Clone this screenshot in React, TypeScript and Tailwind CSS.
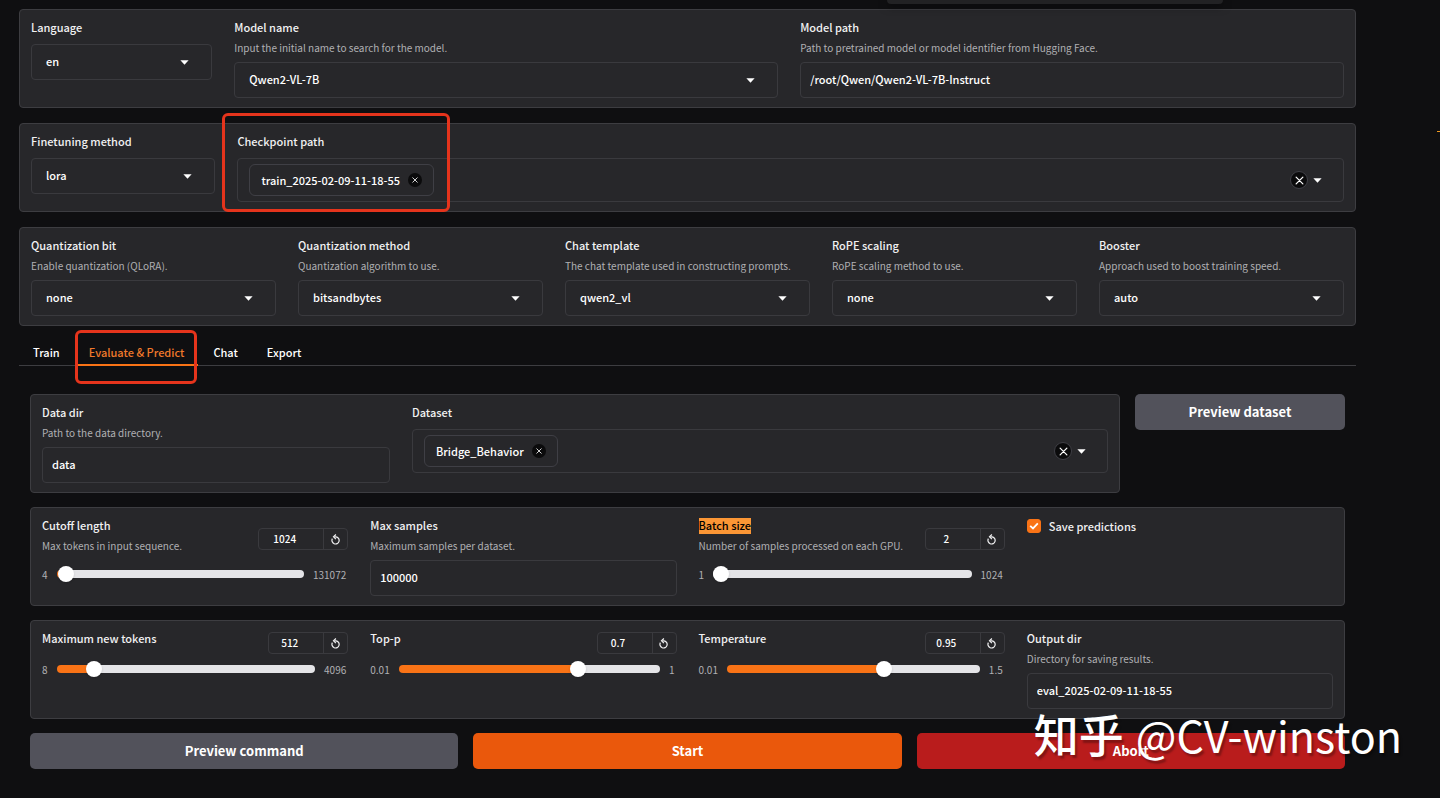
import { useState } from 'react';
import type { ReactNode } from 'react';

interface FieldProps {
  id: string;
  label: string;
  info?: string;
  className?: string;
  children: ReactNode;
}

function Caption({ id, label, info, marked }: { id: string; label: string; info?: string; marked?: boolean }) {
  return (
    <label htmlFor={id} className="flex flex-col items-start pb-2 whitespace-nowrap">
      <span className={marked ? 'h-4 bg-[#fb9635] text-black text-[11px] font-medium leading-[14px]' : 'h-4 text-[#f1f1f2] text-[11px] font-medium leading-[14px]'}>
        {label}
      </span>
      {info && <span className="mt-1 h-[14px] text-[10px] leading-4 text-[#b0b0b3]">{info}</span>}
    </label>
  );
}

function Field({ id, label, info, className = 'flex-1', children }: FieldProps) {
  return (
    <div className={`relative min-w-0 ${className}`}>
      <Caption id={id} label={label} info={info} />
      {children}
    </div>
  );
}

function Panel({ className = '', children }: { className?: string; children: ReactNode }) {
  return (
    <section className={`flex gap-[22px] rounded-sm border border-[#3d3d41] bg-[#27272a] px-[11px] pt-[10px] pb-[9px] ${className}`}>
      {children}
    </section>
  );
}

function Caret({ className = '' }: { className?: string }) {
  return (
    <svg className={className} width="9" height="5" viewBox="0 0 9 5" fill="white">
      <path d="M0.4 0.3h8.2L4.5 4.7z" />
    </svg>
  );
}

function Dropdown({ id, value }: { id: string; value: string }) {
  return (
    <div className="grid items-center">
      <select
        id={id}
        className="col-start-1 row-start-1 h-9 w-full appearance-none rounded-sm border border-[#3a3a3e] bg-transparent px-[14px] pb-[2px] text-[11px] font-medium text-white outline-none"
        defaultValue={value}
      >
        <option>{value}</option>
      </select>
      <Caret className="pointer-events-none col-start-1 row-start-1 mr-[23px] justify-self-end" />
    </div>
  );
}

function TextBox({ id, value }: { id: string; value: string }) {
  return (
    <input
      id={id}
      type="text"
      defaultValue={value}
      className="block h-9 w-full rounded-sm border border-[#3a3a3e] bg-transparent px-[9px] pb-[2px] text-[11px] font-medium text-white outline-none"
    />
  );
}

function Cross({ size }: { size: number }) {
  return (
    <svg width={size} height={size} viewBox="0 0 8 8" stroke="white" strokeWidth="1.1" strokeLinecap="round">
      <path d="M1 1l6 6M7 1L1 7" />
    </svg>
  );
}

function MultiSelect({ id, value }: { id: string; value: string }) {
  return (
    <div className="flex h-11 items-center rounded-sm border border-[#3a3a3e] pr-[21px] pl-[11px]">
      <span className="flex h-8 items-center gap-2 rounded-md border border-[#3f3f45] px-[11px] text-[11px] font-medium text-white">
        {value}
        <button type="button" aria-label={`Remove ${value}`} className="flex size-[14px] items-center justify-center rounded-full bg-[#0b0b0c]">
          <Cross size={6} />
        </button>
      </span>
      <input id={id} type="text" className="min-w-0 flex-1 bg-transparent px-2 text-[11px] text-white outline-none" />
      <button type="button" aria-label="Clear" className="mr-[5px] flex size-[18px] items-center justify-center rounded-full border border-[#3f3f45] bg-[#0b0b0c]">
        <Cross size={9} />
      </button>
      <Caret />
    </div>
  );
}

interface SliderProps {
  id: string;
  label: string;
  info?: string;
  min: number;
  max: number;
  step: number;
  initial: number;
  wide?: boolean;
  marked?: boolean;
}

function Slider({ id, label, info, min, max, step, initial, wide, marked }: SliderProps) {
  const [value, setValue] = useState(initial);
  const percent = ((value - min) / (max - min)) * 100;

  return (
    <div className="min-w-0 flex-1">
      <div className="flex items-center justify-between">
        <Caption id={id} label={label} info={info} marked={marked} />
        <div className="flex h-[22px] rounded-sm border border-[#3a3a3e]">
          <input
            type="number"
            aria-label={`${label} value`}
            value={value}
            min={min}
            max={max}
            step={step}
            onChange={(e) => setValue(Number(e.target.value))}
            className={`${wide ? 'w-16' : 'w-[54px]'} bg-transparent pb-[2px] pl-[2px] text-center text-[10px] font-medium text-white outline-none`}
          />
          <button
            type="button"
            aria-label={`Reset ${label}`}
            onClick={() => setValue(initial)}
            className="flex w-6 items-center justify-center border-l border-[#3a3a3e]"
          >
            <svg width="10" height="11" viewBox="0 0 10 11" fill="none" stroke="#f1f1f2" strokeWidth="1.2">
              <path d="M1.4 4.6A3.6 3.6 0 1 0 5 2.8H3.4" />
              <path d="M4.9 0.5L2.5 2.8L4.9 5.1" />
            </svg>
          </button>
        </div>
      </div>
      <div className="mt-[6px] flex h-4 items-center gap-[9px] pr-[2px] text-[10px] text-[#b0b0b3]">
        <span>{min}</span>
        <input
          id={id}
          type="range"
          value={value}
          min={min}
          max={max}
          step={step}
          onChange={(e) => setValue(Number(e.target.value))}
          className="h-2 min-w-0 flex-1 appearance-none rounded-full outline-none [&::-webkit-slider-thumb]:size-4 [&::-webkit-slider-thumb]:appearance-none [&::-webkit-slider-thumb]:rounded-full [&::-webkit-slider-thumb]:bg-white [&::-webkit-slider-thumb]:shadow-sm"
          style={{ background: `linear-gradient(to right, #f97316 ${percent}%, #e4e4e7 ${percent}%)` }}
        />
        <span>{max}</span>
      </div>
    </div>
  );
}

const tabs = ['Train', 'Evaluate & Predict', 'Chat', 'Export'];

export default function App() {
  return (
    <div className="relative min-h-screen overflow-hidden bg-[#0f0f11] font-['Noto_Sans_CJK_SC',sans-serif]">
      <div className="absolute top-0 left-[887px] z-10 h-1 w-[336px] rounded-b-md bg-[#222224] shadow-[0_2px_8px_rgba(0,0,0,0.5)]" />
      <div className="absolute top-[131px] right-0 h-px w-[3px] bg-[#f09a20]" />

      <main className="flex flex-col gap-[15px] pt-[9px] pr-[84px] pb-7 pl-[19px]">
        <Panel>
          <Field id="language" label="Language">
            <Dropdown id="language" value="en" />
          </Field>
          <Field id="model-name" label="Model name" info="Input the initial name to search for the model." className="flex-3">
            <Dropdown id="model-name" value="Qwen2-VL-7B" />
          </Field>
          <Field id="model-path" label="Model path" info="Path to pretrained model or model identifier from Hugging Face." className="flex-3">
            <TextBox id="model-path" value="/root/Qwen/Qwen2-VL-7B-Instruct" />
          </Field>
        </Panel>

        <Panel>
          <Field id="finetuning" label="Finetuning method">
            <Dropdown id="finetuning" value="lora" />
          </Field>
          <Field id="checkpoint" label="Checkpoint path" className="flex-6">
            <MultiSelect id="checkpoint" value="train_2025-02-09-11-18-55" />
            <div className="pointer-events-none absolute -top-[21px] -left-[15px] h-[99px] w-[228px] rounded-md border-3 border-[#e5341c]" />
          </Field>
        </Panel>

        <Panel>
          <Field id="quant-bit" label="Quantization bit" info="Enable quantization (QLoRA).">
            <Dropdown id="quant-bit" value="none" />
          </Field>
          <Field id="quant-method" label="Quantization method" info="Quantization algorithm to use.">
            <Dropdown id="quant-method" value="bitsandbytes" />
          </Field>
          <Field id="template" label="Chat template" info="The chat template used in constructing prompts.">
            <Dropdown id="template" value="qwen2_vl" />
          </Field>
          <Field id="rope" label="RoPE scaling" info="RoPE scaling method to use.">
            <Dropdown id="rope" value="none" />
          </Field>
          <Field id="booster" label="Booster" info="Approach used to boost training speed.">
            <Dropdown id="booster" value="auto" />
          </Field>
        </Panel>

        <div>
          <nav role="tablist" className="flex gap-px border-b border-[#3d3d41]">
            {tabs.map((tab, i) => (
              <div key={tab} className="relative -mb-px flex">
                <button
                  type="button"
                  role="tab"
                  aria-selected={i === 1}
                  className={
                    i === 1
                      ? 'h-[25px] border-b-2 border-[#f97316] px-[14px] text-[11px] font-medium text-[#f0792b]'
                      : 'h-[25px] border-b-2 border-transparent px-[14px] text-[11px] font-medium text-white'
                  }
                >
                  {tab}
                </button>
                {i === 1 && (
                  <div className="pointer-events-none absolute -top-[11px] left-0 h-[54px] w-[122px] rounded-md border-3 border-[#e5341c]" />
                )}
              </div>
            ))}
          </nav>

          <div className="flex flex-col gap-[14px] px-[11px] pt-7">
            <div className="flex items-start gap-[15px]">
              <Panel className="flex-1">
                <Field id="data-dir" label="Data dir" info="Path to the data directory.">
                  <TextBox id="data-dir" value="data" />
                </Field>
                <Field id="dataset" label="Dataset" className="flex-2">
                  <MultiSelect id="dataset" value="Bridge_Behavior" />
                </Field>
              </Panel>
              <button type="button" className="h-9 w-[210px] rounded-[5px] bg-[#52525b] text-[13px] font-bold text-white">
                Preview dataset
              </button>
            </div>

            <Panel>
              <Slider id="cutoff" label="Cutoff length" info="Max tokens in input sequence." min={4} max={131072} step={1} initial={1024} wide />
              <Field id="max-samples" label="Max samples" info="Maximum samples per dataset.">
                <TextBox id="max-samples" value="100000" />
              </Field>
              <Slider id="batch" label="Batch size" info="Number of samples processed on each GPU." min={1} max={1024} step={1} initial={2} marked />
              <label className="flex h-4 flex-1 items-center gap-2 text-[11px] font-medium text-[#f1f1f2]">
                <span className="grid items-center justify-items-center">
                  <input
                    type="checkbox"
                    defaultChecked
                    className="peer col-start-1 row-start-1 size-[14px] appearance-none rounded-[3px] border border-[#52525b] checked:border-[#f97316] checked:bg-[#f97316]"
                  />
                  <svg className="pointer-events-none invisible col-start-1 row-start-1 peer-checked:visible" width="10" height="8" viewBox="0 0 10 8" fill="none" stroke="white" strokeWidth="1.8">
                    <path d="M1.2 3.8L4 6.4L8.8 1.4" />
                  </svg>
                </span>
                Save predictions
              </label>
            </Panel>

            <Panel>
              <Slider id="max-new-tokens" label="Maximum new tokens" min={8} max={4096} step={1} initial={512} />
              <Slider id="top-p" label="Top-p" min={0.01} max={1} step={0.01} initial={0.7} />
              <Slider id="temperature" label="Temperature" min={0.01} max={1.5} step={0.01} initial={0.95} />
              <Field id="output-dir" label="Output dir" info="Directory for saving results.">
                <TextBox id="output-dir" value="eval_2025-02-09-11-18-55" />
              </Field>
            </Panel>

            <div className="grid grid-cols-3 gap-[15px] text-[13px] font-bold text-white">
              <button type="button" className="h-9 rounded-[5px] bg-[#52525b]">Preview command</button>
              <button type="button" className="h-9 rounded-[5px] bg-[#ea580c]">Start</button>
              <button type="button" className="h-9 rounded-[5px] bg-[#b91c1c]">Abort</button>
            </div>
          </div>
        </div>
      </main>

      <div className="pointer-events-none absolute right-[38px] bottom-9 flex items-center gap-3 text-[43px] leading-[56px] whitespace-nowrap text-white [text-shadow:2px_3px_2px_rgba(0,0,0,0.3)]">
        <span className="text-[45px] font-medium">知乎</span>
        <span>@CV-winston</span>
      </div>
    </div>
  );
}
